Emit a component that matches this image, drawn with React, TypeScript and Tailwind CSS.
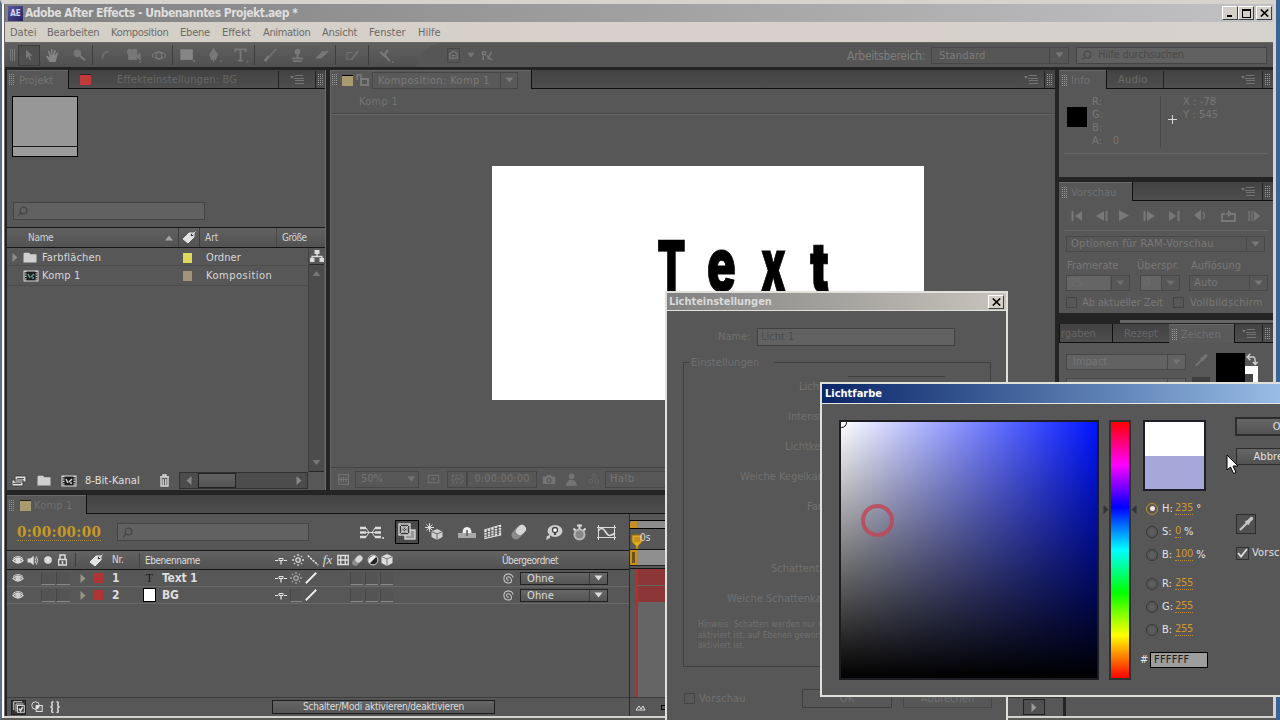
import React from "react";

type P = { className?: string; children?: React.ReactNode };

/* ---------- small building blocks ---------- */

const Svg = ({ className = "", box = "0 0 16 16", children }: P & { box?: string }) => (
  <svg viewBox={box} className={`shrink-0 ${className}`} fill="none" stroke="currentColor" strokeWidth="1.3">
    {children}
  </svg>
);

const Cell = ({ className = "", children }: P) => (
  <div className={`flex h-full shrink-0 items-center ${className}`}>{children}</div>
);

const Center = ({ className = "", children }: P) => (
  <div className={`flex h-full shrink-0 items-center justify-center ${className}`}>{children}</div>
);

const Grip = ({ className = "" }: P) => (
  <Svg className={`h-[12px] w-[6px] ${className}`} box="0 0 6 12">
    {[0, 2, 4].map((x) => (
      <path key={x} d={`M${x + 0.5} 0V12`} stroke="#9a9a9a" strokeWidth="1" strokeDasharray="1 1" />
    ))}
  </Svg>
);

const Down = ({ className = "" }: P) => (
  <Svg className={`h-[6px] w-[9px] ${className}`} box="0 0 9 6">
    <path d="M.5 .5H8.5L4.5 5.5Z" fill="currentColor" stroke="none" />
  </Svg>
);

const Right = ({ className = "" }: P) => (
  <Svg className={`h-[9px] w-[6px] ${className}`} box="0 0 6 9">
    <path d="M.5 0L5.5 4.5L.5 9Z" fill="currentColor" stroke="none" />
  </Svg>
);

const PanelMenu = () => (
  <Svg className="h-[9px] w-[14px] text-[#747474]" box="0 0 14 9">
    <path d="M0 1H4L2 4Z" fill="currentColor" stroke="none" />
    <path d="M5 .5H13M4 3.5H14M5 5.5H14M5 8.5H14" strokeWidth="1" />
  </Svg>
);

const Strip = ({ className = "", children }: P) => (
  <div
    className={`flex h-full shrink-0 items-center border-b border-l border-[#101010] bg-linear-to-b from-[#424242] to-[#4e4e4e] pt-px ${className}`}
  >
    {children}
  </div>
);

const Lens = ({ className = "" }: P) => (
  <Svg className={`h-[11px] w-[11px] ${className}`} box="0 0 11 11">
    <circle cx="6.5" cy="4.5" r="3.4" />
    <path d="M4 7L1 10" />
  </Svg>
);

const Eye = ({ className = "" }: P) => (
  <Svg className={`h-[9px] w-[12px] ${className}`} box="0 0 12 9">
    <path d="M1 4.5Q6 -.5 11 4.5Q6 9.5 1 4.5Z" />
    <circle cx="6" cy="4.5" r="2" fill="currentColor" />
    <path d="M1 2.5Q6 -1.5 11 2.5" strokeWidth="1" />
  </Svg>
);

const Tag = () => (
  <Svg className="h-[13px] w-[14px] text-[#e4e4e4]" box="0 0 14 13">
    <path d="M1 8L7 2L12 2L12 6L6 12Z" fill="currentColor" strokeWidth="1" />
    <circle cx="10" cy="4" r="1.3" fill="#333" stroke="none" />
    <path d="M10 4L13.5 .5" stroke="#ddd" strokeWidth="1" />
  </Svg>
);

const Shy = () => (
  <Svg className="h-[9px] w-[12px] text-[#e6e6e6]" box="0 0 12 9">
    <path d="M0 4.5H3M9 4.5H12M6 4V8.5" strokeWidth="1.2" />
    <path d="M4 4.500V2.500H8V4.500Z" strokeWidth="1" />
  </Svg>
);

const Sun = ({ className = "" }: P) => (
  <Svg className={`h-[12px] w-[12px] ${className}`} box="0 0 12 12">
    <circle cx="6" cy="6" r="2.2" />
    <path d="M6 0V2M6 10V12M0 6H2M10 6H12M2 2L3 3M9 9L10 10M10 2L9 3M3 9L2 10" />
  </Svg>
);

const Film = ({ className = "", tint = "#58a08e" }: P & { tint?: string }) => (
  <Svg className={className} box="0 0 16 12">
    <rect x="1" y="1" width="14" height="10" fill="#1c1c1c" strokeWidth="1" />
    <path d="M2.500 1V11M13.500 1V11" strokeWidth="2" strokeDasharray="1.2 1.2" />
    <path d="M5 4L7 8M8 7L11 4M9 8H11" stroke={tint} strokeWidth="1.6" />
  </Svg>
);

const Folder = () => (
  <Svg className="h-[11px] w-[14px] text-[#cfcfcf]" box="0 0 14 11">
    <path d="M.5 10.5V2Q.5 .8 2 .8H6L7.5 2.3H13.5V10.5Z" fill="currentColor" stroke="none" />
  </Svg>
);

const Cube = ({ className = "" }: P) => (
  <Svg className={className} box="0 0 12 12">
    <path d="M6 0L11.5 2.5V9L6 12L.5 9V2.5Z" fill="#dedede" stroke="none" />
    <path d="M.5 2.5L6 5L11.5 2.5M6 5V12" stroke="#777" strokeWidth="1" />
  </Svg>
);

const Pill = ({ className = "" }: P) => (
  <Svg className={className} box="0 0 16 18">
    <path d="M5 12L10.5 6" stroke="#8a8a8a" strokeWidth="9" strokeLinecap="round" />
    <path d="M9 8L11 6" stroke="#d6d6d6" strokeWidth="8" strokeLinecap="round" />
  </Svg>
);

const Dropper = ({ className = "" }: P) => (
  <Svg className={className} box="0 0 16 16">
    <path d="M2 14L9 7" strokeWidth="2.2" />
    <path d="M7.5 5L11 8.5" strokeWidth="2" />
    <path d="M10 6L13.5 2.5" strokeWidth="3.4" strokeLinecap="round" />
  </Svg>
);

/* ---------- title, menu, tools ---------- */

const WinButton = ({ children, className = "" }: P) => (
  <div
    className={`flex h-[14px] w-[16px] shrink-0 items-center justify-center border border-b-[#404040] border-l-white border-r-[#404040] border-t-white bg-[#d4d0c8] text-black ${className}`}
  >
    {children}
  </div>
);

const Cross = () => (
  <Svg className="h-[8px] w-[9px]" box="0 0 9 8">
    <path d="M.8 .5L8.2 7.5M8.2 .5L.8 7.5" strokeWidth="1.6" />
  </Svg>
);

const TitleBar = () => (
  <div className="flex h-[18px] items-center bg-linear-to-r from-[#808080] to-[#c2c2c4] pl-[3px]">
    <div className="flex h-[15px] w-[15px] items-center justify-center bg-linear-to-br from-[#5c5aa4] to-[#23205e] text-[8px] leading-[15px] font-bold text-[#d8d4f4]">
      AE
    </div>
    <span className="ml-[2px] text-[12px] font-bold tracking-[-0.49px] text-[#dedede]">
      Adobe After Effects - Unbenanntes Projekt.aep *
    </span>
    <WinButton className="ml-auto">
      <Svg className="h-[8px] w-[8px]" box="0 0 8 8">
        <path d="M1 7H6" strokeWidth="2" />
      </Svg>
    </WinButton>
    <WinButton>
      <Svg className="h-[9px] w-[9px]" box="0 0 9 9">
        <rect x=".5" y="1" width="8" height="7.5" strokeWidth="1" />
        <path d="M0 1H9" strokeWidth="2" />
      </Svg>
    </WinButton>
    <WinButton className="mr-[1px] ml-[2px]">
      <Cross />
    </WinButton>
  </div>
);

const MenuBar = () => (
  <div className="flex h-[20px] items-center bg-linear-to-r from-[#d2d0c6] via-[#d8d0cc] to-[#d6d2cc] pt-px pl-[5px] text-[#6c6a66]">
    <span className="w-[37px]">Datei</span>
    <span className="w-[64px] tracking-[-0.2px]">Bearbeiten</span>
    <span className="w-[69px] tracking-[-0.3px]">Komposition</span>
    <span className="w-[42px] tracking-[-0.2px]">Ebene</span>
    <span className="w-[41px]">Effekt</span>
    <span className="w-[59px] tracking-[-0.35px]">Animation</span>
    <span className="w-[47px] tracking-[-0.2px]">Ansicht</span>
    <span className="w-[49px]">Fenster</span>
    <span>Hilfe</span>
  </div>
);

const Tools = () => (
  <div className="flex h-[25px] items-center border-t border-[#6a6a62] bg-[#565656] text-[#787878]">
    <div className="flex h-full w-[435px] shrink-0 items-center bg-linear-to-b from-[#606060] to-[#505050] [clip-path:polygon(0_0,100%_0,98%_12%,96%_40%,94.5%_100%,0_100%)]">
      <Center className="w-[13px] pl-[3px]"><Grip className="h-[19px] w-[4px]" /></Center>
      <Center className="h-[21px]! w-[22px] border border-[#3c3c3c] bg-[#505050]">
        <Svg className="h-[14px] w-[12px]"><path d="M4 1V13L7 10L9 15L11 14L9 9H13Z" fill="currentColor" stroke="none" /></Svg>
      </Center>
      <Center className="w-[25px] text-[#868686]">
        <Svg className="h-[15px] w-[15px]"><path d="M5 15L1 9L2 8L5 10L3 3L4.5 3L6.5 8V1H8V8L10 2L11.5 2.5L10.5 8L13 4.5L14 5L11.5 14V15Z" fill="currentColor" stroke="none" /></Svg>
      </Center>
      <Center className="w-[27px]">
        <Svg className="h-[14px] w-[14px]"><circle cx="6" cy="6" r="3.6" fill="#777" /><path d="M9 9L15 14" strokeWidth="2.5" /></Svg>
      </Center>
      <div className="h-[20px] w-px bg-[#3c3c3c]" />
      <Center className="w-[27px] text-[#707070]">
        <Svg className="h-[14px] w-[14px]"><path d="M3 12Q2 5 10 4" strokeWidth="2" /></Svg>
      </Center>
      <Center className="w-[26px]">
        <Svg className="h-[15px] w-[17px]"><circle cx="4" cy="4" r="2.5" fill="currentColor" /><circle cx="9" cy="4" r="2.5" fill="currentColor" /><rect x="3" y="6" width="8" height="6" fill="currentColor" /><path d="M11 9L15 6V12Z" fill="currentColor" /><path d="M14 15H16" /></Svg>
      </Center>
      <Center className="w-[26px]">
        <Svg className="h-[15px] w-[18px]"><ellipse cx="8" cy="8" rx="7" ry="3.5" /><path d="M8 4L11 6V10L8 12L5 10V6Z" /></Svg>
      </Center>
      <div className="h-[20px] w-px bg-[#3c3c3c]" />
      <Center className="w-[29px] text-[#868686]"><Svg className="h-[15px] w-[17px]"><rect x="1" y="2" width="12" height="10" fill="currentColor" /><path d="M14 14H16" /></Svg></Center>
      <Center className="w-[25px]"><Svg className="h-[15px] w-[15px]"><path d="M7 1L11 7L9 12H5L3 7Z" fill="currentColor" /><path d="M7 12V15M14 14H16" /></Svg></Center>
      <Center className="w-[27px]"><Svg className="h-[15px] w-[16px]"><path d="M2 4V1.5H13V4M7.5 1.5V13.5M5 13.5H10" strokeWidth="2" /><path d="M14 14.5H16" /></Svg></Center>
      <div className="h-[20px] w-px bg-[#3c3c3c]" />
      <Center className="w-[30px]"><Svg className="h-[15px] w-[15px]"><path d="M14 1L6 10" strokeWidth="1.6" /><path d="M6 9L2 14" strokeWidth="3" /></Svg></Center>
      <Center className="w-[24px]"><Svg className="h-[15px] w-[15px]"><circle cx="8" cy="4" r="2.5" fill="currentColor" /><path d="M8 6V10M2 11H14M3 14H13" strokeWidth="2" /></Svg></Center>
      <Center className="w-[26px]"><Svg className="h-[13px] w-[16px]"><path d="M1 11L5 7H11L7 11ZM6 6L9 3H15L12 6Z" fill="currentColor" /></Svg></Center>
      <div className="h-[20px] w-px bg-[#3c3c3c]" />
      <Center className="w-[32px] text-[#707070]"><Svg className="h-[15px] w-[15px]"><path d="M9 12H2V5H8" /><path d="M14 3L7 12" strokeWidth="2" /></Svg></Center>
      <div className="h-[20px] w-px bg-[#3c3c3c]" />
      <Center className="w-[34px]"><Svg className="h-[15px] w-[16px]"><path d="M2 4L6 8L10 2M6 7L12 14" strokeWidth="2.4" /><path d="M14 15H16" /></Svg></Center>
    </div>
    <Center className="w-[26px]">
      <div className="flex h-[15px] w-[13px] items-center justify-center border border-[#474747]"><Svg className="h-[10px] w-[11px]"><path d="M2 13V6L8 2L14 6V13ZM5 9H11" strokeWidth="2" /></Svg></div>
    </Center>
    <Center className="w-[9px]"><Svg className="h-[10px] w-[8px]"><path d="M2 4H14L8 12Z" fill="currentColor" /></Svg></Center>
    <Center className="w-[24px]"><Svg className="h-[13px] w-[12px]"><path d="M2 3H6V7H2ZM8 8L14 14M9 13L14 3M3 14V9" strokeWidth="2" /></Svg></Center>
    <span className="ml-auto w-[84px] pt-px text-[12px] tracking-[-0.25px] text-[#7e7e7e]">Arbeitsbereich:</span>
    <div className="flex h-[17px] w-[138px] items-center border border-[#484848]">
      <span className="w-[118px] pt-px pl-[7px] tracking-[0.2px] text-[#7c7c7c]">Standard</span>
      <div className="h-full w-px bg-[#464646]" />
      <Center className="w-[18px]"><Down /></Center>
    </div>
    <div className="mr-[6px] ml-[7px] flex h-[17px] w-[191px] items-center border border-[#444] bg-[#616161] pl-[4px] text-[#4a4a4a]">
      <Lens />
      <span className="ml-[6px] tracking-[-0.2px]">Hilfe durchsuchen</span>
    </div>
  </div>
);

/* ---------- project panel ---------- */

const ProjectPanel = () => (
  <div className="flex w-[319px] shrink-0 flex-col border-r border-[#6e6e6e] bg-[#575757]">
    <div className="flex h-[19px]">
      <Cell className="w-[61px] border-t border-[#6a6a6a]">
        <Grip className="ml-[2px] w-[4px]" />
        <span className="ml-[4px] pt-px text-[#747474]">Projekt</span>
      </Cell>
      <Strip className="w-[257px]">
        <Cell className="w-[210px] border-r border-[#222] pl-[11px]">
          <div className="h-[11px] w-[11px] border-t border-[#222] bg-[#c23a3a]" />
          <span className="ml-[26px] tracking-[0.15px] text-[#666]">Effekteinstellungen: BG</span>
        </Cell>
        <Center className="w-[36px]"><PanelMenu /></Center>
        <Center className="w-[10px] border-l border-[#222]"><Grip /></Center>
      </Strip>
    </div>
    <div className="flex h-[138px] flex-col pl-[5px]">
      <div className="mt-[7px] flex h-[61px] w-[66px] flex-col border border-black bg-[#979797]">
        <div className="h-[50px] border-b border-[#181818]" />
        <div className="flex-1 bg-[#9c9c9c]" />
      </div>
      <div className="mt-[45px] ml-px flex h-[18px] w-[192px] items-center border border-[#444] bg-[#616161] pl-[3px] text-[#454545]">
        <Lens />
      </div>
    </div>
    <div className="flex h-[21px] items-center border-y border-[#161616] bg-linear-to-b from-[#616161] to-[#525252] text-[#d2d2d2]">
      <Cell className="w-[157px] pl-[21px]"><span className="text-[10px] tracking-[-0.3px]">Name</span></Cell>
      <Cell className="w-[14px]"><Down className="w-[10px] rotate-180 text-[#a4a4a4]" /></Cell>
      <Center className="w-[22px] border-x border-[#3e3e3e]"><Tag /></Center>
      <Cell className="w-[77px] border-r border-[#484848] pl-[5px] text-[10px]">Art</Cell>
      <Cell className="flex-1 pl-[5px] text-[10px] tracking-[-0.5px]">Größe</Cell>
    </div>
    <div className="flex flex-1">
      <div className="w-[300px]">
        <div className="flex h-[18px] items-center border-b border-[#4c4c4c] pt-[2px] text-[#d8d8d8]">
          <Cell className="w-[16px] pl-[5px]"><Right className="text-[#8c8c8c]" /></Cell>
          <Folder />
          <span className="ml-[5px] w-[141px] tracking-[0.15px]">Farbflächen</span>
          <div className="h-[10px] w-[9px] bg-[#dcd85c]" />
          <span className="ml-[14px] tracking-[0.1px]">Ordner</span>
        </div>
        <div className="flex h-[20px] items-center border-b border-[#4c4c4c] pt-px text-[#d8d8d8]">
          <Film className="ml-[16px] h-[12px] w-[16px]" />
          <span className="ml-[3px] w-[141px] tracking-[0.2px]">Komp 1</span>
          <div className="h-[10px] w-[9px] bg-[#a0947c]" />
          <span className="ml-[14px] tracking-[0.5px]">Komposition</span>
        </div>
      </div>
      <div className="ml-px flex w-[16px] flex-col border-l border-[#404040]">
        <Center className="h-[17px]! border-b border-[#2a2a2a]">
          <Svg className="h-[14px] w-[14px] text-[#dcdcdc]" box="0 0 14 14">
            <path d="M4.5 1H9.5V5H4.5ZM0 9H4.5V13H0ZM9.5 9H14V13H9.5Z" fill="currentColor" stroke="none" />
            <path d="M7 5V7.5M2 9V7.5H12V9" />
          </Svg>
        </Center>
        <div className="flex flex-1 flex-col items-center justify-between border-b border-[#262626] bg-[#4c4c4c] py-[5px] text-[#787878]">
          <Down className="h-[7px] rotate-180" />
          <Down className="h-[7px]" />
        </div>
      </div>
    </div>
    <div className="flex h-[18px] items-center pb-px text-[#e0e0e0]">
      <Center className="w-[24px]">
        <Svg className="h-[12px] w-[16px]" box="0 0 16 12">
          <path d="M4 1H15V7H4ZM1 5H12V11H1Z" fill="currentColor" stroke="#444" strokeWidth="1" />
          <path d="M2 8.500H10M6 3.500H13" stroke="#555" strokeWidth="1" />
        </Svg>
      </Center>
      <Center className="w-[25px]"><Folder /></Center>
      <Center className="w-[26px]"><Film className="h-[12px] w-[16px]" tint="#d0d0d0" /></Center>
      <span className="ml-[3px] w-[74px] tracking-[0.08px]">8-Bit-Kanal</span>
      <Svg className="h-[13px] w-[11px]" box="0 0 11 13">
        <path d="M1 3H10M4 3V1H7V3M2 4V12H9V4M4.2 5V11M6.8 5V11" />
      </Svg>
      <div className="ml-auto mr-[17px] flex h-[17px] w-[129px] items-center border border-[#303030] bg-[#4c4c4c] text-[#868686]">
        <Center className="w-[18px]"><Right className="rotate-180" /></Center>
        <div className="h-full w-[38px] border border-[#222] bg-linear-to-b from-[#626262] to-[#545454]" />
        <Right className="ml-auto mr-[5px]" />
      </div>
    </div>
  </div>
);

/* ---------- composition viewer ---------- */

const Viewer = () => (
  <div className="flex w-[725px] shrink-0 flex-col border-l border-[#6a6a6a] bg-[#575757]">
    <div className="flex h-[19px] shrink-0 text-[#7a7a7a]">
      <Cell className="w-[200px] border-t border-[#6a6a6a]">
        <Grip className="ml-px" />
        <div className="ml-[4px] h-[11px] w-[11px] border-t border-black bg-[#a99a70]" />
        <Svg className="mx-[3px] h-[12px] w-[13px]" box="0 0 13 12">
          <path d="M1 6V1H5V5" strokeWidth="1.5" /><rect x="5" y="5" width="7" height="6" strokeWidth="2" />
        </Svg>
        <div className="flex h-[17px] w-[146px] items-center border border-[#464646] bg-[#595959]">
          <span className="w-[127px] pt-px pl-[5px] tracking-[0.38px]">Komposition: Komp 1</span>
          <div className="h-full w-px bg-[#464646]" />
          <Center className="flex-1"><Down /></Center>
        </div>
      </Cell>
      <Strip className="w-[524px]">
        <Center className="ml-auto w-[26px]"><PanelMenu /></Center>
        <Center className="w-[11px] border-l border-[#222]"><Grip /></Center>
      </Strip>
    </div>
    <div className="flex h-[25px] shrink-0 items-center border-b border-[#484848] pt-px pl-[28px] tracking-[0.3px] text-[#747474]">
      Komp 1
    </div>
    <div className="flex-1 border-t border-[#666] pt-[51px] pl-[161px]">
      <div className="flex h-[234px] w-[432px] bg-white pt-[57px] pl-[165px] font-[Inter] text-[70px] leading-[85px] font-black text-black">
        <span className="block w-[50px] origin-[0_69px] scale-x-[0.6] [-webkit-text-stroke:0.5px_black]">T</span>
        <span className="block w-[54px] origin-[0_69px] scale-x-[0.68] scale-y-[1.06] [-webkit-text-stroke:1px_black]">e</span>
        <span className="block w-[49px] origin-[0_69px] scale-x-[0.58] scale-y-[1.06] [-webkit-text-stroke:1px_black]">x</span>
        <span className="block origin-[0_69px] scale-x-[0.68] scale-y-[0.97] [-webkit-text-stroke:1px_black]">t</span>
      </div>
    </div>
    <div className="flex h-[23px] shrink-0 items-center border-t border-[#444] text-[#747474]">
      <Center className="w-[24px]"><Svg className="h-[13px] w-[13px]"><rect x="2" y="2" width="12" height="12" /><path d="M5 5V11M8 5V11M11 5V11M2 8H14" /></Svg></Center>
      <div className="flex h-[17px] w-[64px] items-center border border-[#474747] pl-[5px]">
        <span className="w-[46px]">50%</span><Down />
      </div>
      <Center className="w-[28px]"><Svg className="h-[12px] w-[15px]"><rect x="1" y="3" width="14" height="10" /><path d="M8 6V10M5 8H11" /></Svg></Center>
      <Center className="h-[17px]! w-[20px] border border-[#474747]"><Svg className="h-[12px] w-[15px]"><rect x="1" y="3" width="14" height="10" strokeDasharray="3 2" /><path d="M4 10L7 6L10 9L13 6" /></Svg></Center>
      <Center className="h-[17px]! w-[70px] border border-[#474747] tracking-[0.1px]">0:00:00:00</Center>
      <Center className="w-[23px]"><Svg className="h-[13px] w-[14px]"><path d="M1 5H5L6 3H10L11 5H15V13H1Z" fill="currentColor" /><circle cx="8" cy="9" r="2.5" stroke="#555" /></Svg></Center>
      <Center className="w-[23px]"><Svg className="h-[13px] w-[13px]"><circle cx="8" cy="4" r="3" fill="currentColor" /><path d="M2 15Q3 9 8 9T14 15Z" fill="currentColor" /></Svg></Center>
      <Center className="w-[22px]"><Svg className="h-[12px] w-[12px] text-[#666]"><circle cx="8" cy="4" r="2.5" /><circle cx="4" cy="11" r="2.5" /><circle cx="12" cy="11" r="2.5" /></Svg></Center>
      <div className="flex h-[17px] w-[110px] items-center border border-[#474747] pl-[4px] tracking-[0.5px]">Halb</div>
    </div>
  </div>
);

/* ---------- right column ---------- */

const Pick = ({ className = "", children }: P) => (
  <div className={`flex h-[16px] shrink-0 items-center justify-between border border-[#484848] pr-[4px] pl-[6px] ${className}`}>
    {children}
    <div className="ml-auto mr-[4px] h-full w-px bg-[#4a4a4a]" />
    <Down />
  </div>
);

const Check = ({ className = "" }: P) => (
  <div className={`h-[11px] w-[11px] shrink-0 border border-[#454545] ${className}`} />
);

const SidePanels = () => (
  <div className="flex w-[214px] shrink-0 flex-col gap-[5px] text-[#787878]">
    <div className="h-[107px] shrink-0 bg-[#575757]">
      <div className="flex h-[19px]">
        <Cell className="w-[47px] border-t border-[#6a6a6a] pt-px text-[#707070]"><Grip className="ml-[3px]" /><span className="ml-[3px]">Info</span></Cell>
        <Strip className="w-[167px]">
          <Cell className="w-[57px] border-r border-[#222] pl-[11px] tracking-[0.3px] text-[#6a6a6a]">Audio</Cell>
          <Center className="ml-auto w-[28px]"><PanelMenu /></Center>
          <Center className="w-[11px] border-l border-[#222]"><Grip /></Center>
        </Strip>
      </div>
      <div className="mx-[5px] flex h-[65px] border-b border-[#666] pt-[7px]">
        <div className="mt-[11px] ml-[3px] h-[20px] w-[20px] bg-black" />
        <div className="ml-[5px] h-[52px] w-[69px] border-r border-[#484848] leading-[13px] tracking-[0.3px]">
          <div className="-mt-px">R:</div><div>G:</div><div>B:</div><div>A:&nbsp;&nbsp;&nbsp;0</div>
        </div>
        <Svg className="mt-[18px] ml-[6px] h-[11px] w-[11px] text-[#d8d8d8]" box="0 0 11 11"><path d="M5.5 1V10M1 5.500H10" strokeWidth="1" /></Svg>
        <div className="ml-[5px] leading-[13px] tracking-[0.1px]">
          <div className="-mt-px">X : -78</div><div>Y : 545</div>
        </div>
      </div>
    </div>
    <div className="h-[131px] shrink-0 bg-[#575757]">
      <div className="flex h-[19px]">
        <Cell className="w-[73px] border-t border-[#6a6a6a] pt-px text-[#707070]"><Grip className="ml-[3px]" /><span className="ml-[3px]">Vorschau</span></Cell>
        <Strip className="w-[141px]">
          <Center className="ml-auto w-[28px]"><PanelMenu /></Center>
          <Center className="w-[11px] border-l border-[#222]"><Grip /></Center>
        </Strip>
      </div>
      <div className="mx-[5px] flex h-[30px] items-center border-b border-[#6a6a6a]">
        <Center className="w-[25px]"><Svg className="h-[10px] w-[12px]" box="0 0 12 10"><path d="M1.500 0V10" strokeWidth="2" /><path d="M11 0L4 5L11 10Z" fill="currentColor" stroke="none" /></Svg></Center>
        <Center className="w-[25px]"><Svg className="h-[10px] w-[12px]" box="0 0 12 10"><path d="M8 0L0 5L8 10Z" fill="currentColor" stroke="none" /><path d="M10.500 0V10" strokeWidth="2" /></Svg></Center>
        <Center className="w-[20px]"><Svg className="h-[11px] w-[10px]" box="0 0 10 11"><path d="M0 0L10 5.500L0 11Z" fill="currentColor" stroke="none" /></Svg></Center>
        <Center className="w-[29px]"><Svg className="h-[10px] w-[12px]" box="0 0 12 10"><path d="M4 0L12 5L4 10Z" fill="currentColor" stroke="none" /><path d="M1.500 0V10" strokeWidth="2" /></Svg></Center>
        <Center className="w-[22px]"><Svg className="h-[10px] w-[12px]" box="0 0 12 10"><path d="M1 0L8 5L1 10Z" fill="currentColor" stroke="none" /><path d="M10.500 0V10" strokeWidth="2" /></Svg></Center>
        <Center className="w-[30px]"><Svg className="h-[11px] w-[13px]" box="0 0 13 11"><path d="M0 5L7 0V11Z" fill="currentColor" stroke="none" /><path d="M9 2Q12 5.500 9 9" /></Svg></Center>
        <Center className="w-[27px]"><Svg className="h-[12px] w-[15px]" box="0 0 15 12"><path d="M4 4H1V11H14V4H11" strokeWidth="1.800" /><path d="M5 4H8" strokeWidth="1.800" /><path d="M7 0L12 4L7 7Z" fill="currentColor" stroke="none" /></Svg></Center>
        <Center className="w-[24px]"><Svg className="h-[10px] w-[12px]" box="0 0 12 10"><path d="M1 0V10M4 0V10" /><path d="M6 0L12 5L6 10Z" fill="currentColor" stroke="none" /></Svg></Center>
      </div>
      <div className="flex h-[25px] items-center pl-[7px]"><Pick className="w-[199px] pl-[4px]! tracking-[0.3px]">Optionen für RAM-Vorschau</Pick></div>
      <div className="flex h-[18px] items-center pt-px pl-[8px] tracking-[0.1px]">
        <span className="w-[70px]">Framerate</span><span className="w-[54px]">Überspr.</span><span>Auflösung</span>
      </div>
      <div className="flex h-[17px] items-center pl-[7px]">
        <Pick className="w-[64px] bg-linear-to-r from-[#656565] from-70% to-[#575757] to-70% pl-[3px]! text-[#6e6e6e]"><span>25</span></Pick>
        <Pick className="ml-[10px] w-[40px] bg-linear-to-r from-[#656565] from-55% to-[#575757] to-55% pl-[3px]! text-[#6e6e6e]"><span>0</span></Pick>
        <Pick className="ml-[9px] w-[79px] pl-[4px]! tracking-[0.2px]">Auto</Pick>
      </div>
      <div className="flex h-[22px] items-center pt-px pl-[7px]">
        <Check /><span className="ml-[5px] w-[91px] tracking-[-0.1px]">Ab aktueller Zeit</span><Check /><span className="ml-[6px] tracking-[0.3px]">Vollbildschirm</span>
      </div>
    </div>
    <div className="mt-[2px] flex min-h-0 flex-1 flex-col">
      <div className="ml-[61px] h-[3px] bg-[#666]" />
      <div className="mt-px flex h-[19px] shrink-0">
        <Strip className="w-[53px] pl-[1px] text-[#666]">rgaben</Strip>
        <Strip className="w-[57px] pl-[11px] text-[#666]">Rezept</Strip>
        <Cell className="w-[65px] border-t border-[#6a6a6a] bg-[#5a5a5a] pt-px text-[#707070]"><Grip className="ml-[3px]" /><span className="ml-[3px]">Zeichen</span></Cell>
        <Strip className="flex-1">
          <Center className="w-[27px]"><PanelMenu /></Center>
          <Center className="w-[11px] border-l border-[#222]"><Grip /></Center>
        </Strip>
      </div>
      <div className="flex flex-1 bg-[#575757] pt-[10px] pl-[7px]">
        <div className="flex flex-col gap-[8px] pt-px">
          <Pick className="w-[120px] bg-[#626262] text-[#747474]">Impact</Pick>
          <Pick className="w-[120px] bg-[#626262]" />
        </div>
        <div className="flex w-[30px] flex-col items-center gap-[9px]">
          <Dropper className="h-[15px] w-[14px] text-[#757575]" />
          <div className="h-[8px] w-[18px] bg-[#3e3e3e]" />
        </div>
        <div className="h-[29px] w-[29px] bg-black" />
        <div className="flex flex-col">
          <Svg className="h-[13px] w-[14px] text-[#d0d0d0]"><path d="M3 5H10Q12 5 12 13M6 1L2 5L6 9M9 11L12 14L15 11" strokeWidth="1.8" /></Svg>
          <div className="h-[20px] w-[13px] border-t-8 border-r-[5px] border-white bg-[#444]" />
        </div>
      </div>
    </div>
  </div>
);

/* ---------- timeline ---------- */

const Slot = ({ className = "" }: P) => (
  <div className={`h-[13px] shrink-0 border-b border-l border-b-[#8a8a8a] border-l-[#464646] bg-[#545454] ${className}`} />
);

const Layer = ({ nr, name, solid }: { nr: string; name: string; solid?: boolean }) => (
  <div className="flex h-[17px] items-center border-b border-[#6a6a6a] text-[#dedede]">
    <Center className="w-[22px]"><Eye className="text-[#cfcfcf]" /></Center>
    <Slot className="ml-[12px] w-[14px]" />
    <Slot className="ml-[1px] w-[14px]" />
    <Right className="ml-[10px] text-[#9a9484]" />
    <div className="ml-[7px] h-[10px] w-[10px] bg-[#b03434]" />
    <span className="ml-[9px] w-[31px] text-[12px] font-bold">{nr}</span>
    <Center className="w-[13px]">
      {solid ? (
        <div className="h-[14px] w-[14px] border border-black bg-white" />
      ) : (
        <span className="font-['Liberation_Serif',serif] text-[12px] text-[#1a1a1a]">T</span>
      )}
    </Center>
    <span className="ml-[6px] w-[111px] text-[12px] font-bold tracking-[-0.2px]">{name}</span>
    <Center className="w-[16px]"><Shy /></Center>
    <Center className="w-[14px]">{solid ? <Slot className="w-[12px]" /> : <Sun className="h-[10px] w-[10px] text-[#a8a8a8]" />}</Center>
    <Center className="w-[16px]"><Svg className="h-[12px] w-[12px] text-[#eee]"><path d="M1 15L15 1" strokeWidth="2.400" /></Svg></Center>
    <Slot className="ml-[31px] w-[13px]" />
    <Slot className="ml-[2px] w-[13px]" />
    <Slot className="ml-[2px] w-[13px]" />
    <Svg className="ml-[110px] h-[11px] w-[11px] text-[#cdcdcd]" box="0 0 12 12">
      <path d="M11 5Q10 1 6 1Q1 1 1 6Q1 11 6 11Q10 11 9 7Q8 4 6 4Q3.500 4 4 6.500Q4.500 8.500 6.500 7.500" strokeWidth="1.1" />
    </Svg>
    <div className="ml-[6px] flex h-[13px] w-[88px] items-center border border-[#222] bg-linear-to-b from-[#666] to-[#555] pl-[6px]">
      <span className="pt-px tracking-[0.1px]">Ohne</span>
      <div className="ml-auto h-full w-px bg-[#3a3a3a]" />
      <Down className="mx-[4px] text-[#dcdcdc]" />
    </div>
  </div>
);

const Timeline = () => (
  <div className="flex w-[1056px] shrink-0 flex-col bg-[#575757]">
    <div className="flex h-[19px] shrink-0">
      <Cell className="w-[79px] border-t border-[#6a6a6a] pt-px">
        <Grip className="ml-[2px] w-[4px]" />
        <div className="ml-[5px] h-[11px] w-[11px] border-t border-[#222] bg-[#a99a70]" />
        <span className="ml-[3px] tracking-[0.2px] text-[#707070]">Komp 1</span>
      </Cell>
      <Strip className="flex-1" />
    </div>
    <div className="flex min-h-0 flex-1">
      <div className="flex w-[622px] shrink-0 flex-col">
        <div className="flex h-[36px] shrink-0 items-center">
          <div className="ml-[10px] w-[84px] border-b border-dotted border-[#a8842c] pt-px font-['DejaVu_Serif_Condensed','DejaVu_Serif'] text-[15px] leading-[15px] font-bold tracking-[0.35px] text-[#c79a22]">
            0:00:00:00
          </div>
          <div className="ml-[16px] flex h-[18px] w-[192px] items-center border border-[#454545] bg-[#616161] pl-[4px] text-[#454545]"><Lens /></div>
          <div className="ml-[51px] flex h-full items-center text-[#dcdcdc]">
            <Svg className="h-[13px] w-[24px]" box="0 0 24 13">
              <path d="M0 2H6M0 6.500H6M0 11H6M15 2H21M15 6.500H21M15 11H21" strokeWidth="2.4" /><path d="M6 2L9 6.500H12L15 2M6 6.500H15M6 11L9 6.500M15 11L12 6.500" strokeWidth="1" /><path d="M22 12H24" />
            </Svg>
            <Center className="ml-[11px] h-[24px]! w-[24px] border border-black bg-[#4a4a4a]">
              <Svg className="h-[18px] w-[18px]" box="0 0 18 18"><rect x="7" y="7" width="10" height="9" fill="#999" /><rect x="1" y="1" width="11" height="11" fill="#3a3a3a" /><rect x="4" y="4" width="5" height="5" /><path d="M1 1L12 12M12 1L1 12" strokeWidth=".8" /></Svg>
            </Center>
            <Center className="w-[29px]">
              <Svg className="h-[18px] w-[18px]" box="0 0 18 18"><path d="M4.500 0V9M0 4.500H9M1.500 1.500L7.500 7.500M7.500 1.500L1.500 7.500" strokeWidth="1" /><path d="M12 6L17.500 8.500V14L12 17L6.500 14V8.500Z" fill="#d0d0d0" stroke="none" /><path d="M6.500 8.500L12 11L17.500 8.500M12 11V17" stroke="#666" strokeWidth="1" /></Svg>
            </Center>
            <Center className="ml-[6px] w-[26px]">
              <Svg className="h-[14px] w-[18px]" box="0 0 18 14"><rect x="0" y="8" width="18" height="5" fill="#a8a8a8" stroke="none" /><path d="M4.500 8Q4.500 2 9 2T13.500 8Z" fill="#f0f0f0" stroke="none" /><path d="M9 5V11" stroke="#555" strokeWidth="1.500" /></Svg>
            </Center>
            <Center className="w-[26px]">
              <Svg className="h-[16px] w-[18px]" box="0 0 18 16"><path d="M1.500 6V15M5 5V14M8.500 4V13M12 2V12M16 1V11" strokeWidth="2.400" strokeDasharray="2 .7" /><path d="M0 6L17 1M1 14.500L17 11" strokeWidth="1" /></Svg>
            </Center>
            <Center className="w-[26px]"><Pill className="h-[18px] w-[18px]" /></Center>
            <Center className="ml-[8px] w-[26px]">
              <Svg className="h-[17px] w-[19px]" box="0 0 19 17"><ellipse cx="11" cy="7" rx="7.500" ry="6" fill="#cfcfcf" stroke="none" /><path d="M3 12L6 11V14L2 16Z" fill="#cfcfcf" stroke="none" /><circle cx="11" cy="6" r="2.500" fill="#fff" stroke="#444" /><path d="M11 8V11" stroke="#444" strokeWidth="2" /></Svg>
            </Center>
            <Center className="w-[26px]">
              <Svg className="h-[17px] w-[15px]" box="0 0 15 17"><circle cx="7.500" cy="10.500" r="5" fill="#888" stroke="#b8b8b8" strokeWidth="2" /><path d="M5 1.500H10M7.500 2V5M1.500 4.500L3.500 6.500M13.500 4.500L11.500 6.500" strokeWidth="2" /></Svg>
            </Center>
            <Center className="w-[28px]">
              <Svg className="h-[15px] w-[19px]" box="0 0 19 15"><path d="M0 2.500H19M0 12.500H19M1.500 0V15M17.500 0V15" strokeWidth="1" /><path d="M1 6Q5 1 8 6T13 10.500T18 8" strokeWidth="1.600" /></Svg>
            </Center>
          </div>
        </div>
        <div className="flex h-[20px] shrink-0 items-center border-y border-[#161616] bg-linear-to-b from-[#636363] to-[#525252] text-[10px] text-[#dcdcdc]">
          <Center className="w-[20px] pl-[2px]"><Eye /></Center>
          <Center className="w-[12px]"><Svg className="h-[11px] w-[12px]"><path d="M0 5H4L9 1V15L4 11H0Z" fill="currentColor" stroke="none" /><path d="M11 4Q13 8 11 12M13 2Q16.500 8 13 14" /></Svg></Center>
          <Center className="w-[17px]"><Svg className="h-[8px] w-[8px]"><circle cx="8" cy="8" r="7.500" fill="currentColor" stroke="none" /></Svg></Center>
          <Center className="w-[13px]"><Svg className="h-[12px] w-[9px]" box="0 0 9 12"><path d="M.5 5.500H8.500V11H.5Z" strokeWidth="1.500" /><path d="M2 5V1H7V5M4.500 7V10" strokeWidth="1.500" /></Svg></Center>
          <div className="ml-[6px] h-[14px] w-px bg-[#3c3c3c]" />
          <Center className="w-[38px]"><div className="pl-[2px]"><Tag /></div></Center>
          <span className="ml-[-2px] w-[27px] tracking-[-0.2px]">Nr.</span>
          <div className="h-[14px] w-px bg-[#444]" />
          <span className="w-[131px] pt-px pl-[5px] tracking-[-0.45px]">Ebenenname</span>
          <Center className="w-[19px]"><Shy /></Center>
          <Center className="w-[15px]"><Sun /></Center>
          <Center className="w-[15px]"><Svg className="h-[12px] w-[12px]"><path d="M1 2L15 15" strokeWidth="2.200" strokeDasharray="3 1.500" /></Svg></Center>
          <Center className="w-[15px]"><span className="font-['Liberation_Serif',serif] text-[13px] italic">fx</span></Center>
          <Center className="w-[15px]"><Svg className="h-[12px] w-[12px]"><path d="M1 1V15M15 1V15M5 1V15M11 1V15M1 2H15M1 8H15M1 14H15" strokeWidth="1.800" /></Svg></Center>
          <Center className="w-[15px]"><Pill className="h-[13px] w-[13px]" /></Center>
          <Center className="w-[15px]"><Svg className="h-[12px] w-[12px]"><circle cx="8" cy="8" r="6.500" fill="#222" /><path d="M3.500 12.500A6.500 6.500 0 0 1 12.500 3.500Z" fill="#eee" stroke="none" /></Svg></Center>
          <Center className="w-[14px]"><Cube className="h-[12px] w-[12px]" /></Center>
          <span className="ml-[108px] pt-px tracking-[-0.5px]">Übergeordnet</span>
        </div>
        <div className="flex-1">
          <Layer nr="1" name="Text 1" />
          <Layer nr="2" name="BG" solid />
        </div>
        <div className="flex h-[19px] shrink-0 items-center border-t border-[#3c3c3c] text-[#dcdcdc]">
          <Center className="h-[15px]! ml-[4px] w-[15px] border border-[#222] bg-[#333]"><Svg className="h-[12px] w-[12px]"><path d="M1 12V1H12M4 14V4H14" /><rect x="6" y="6" width="9" height="9" /><path d="M8 10L10 13L13 8" strokeWidth="2" /></Svg></Center>
          <Center className="w-[22px]"><Svg className="h-[12px] w-[14px]"><circle cx="6" cy="6" r="5" /><rect x="7" y="6" width="8" height="8" fill="#666" /><path d="M7 11A5 5 0 0 0 11 6H7Z" fill="#eee" /></Svg></Center>
          <Center className="w-[14px]"><Svg className="h-[12px] w-[12px]"><path d="M6 1Q3 1 4 4T2 8Q5 8 4 12T6 15M10 1Q13 1 12 4T14 8Q11 8 12 12T10 15" strokeWidth="2" /></Svg></Center>
          <Center className="ml-[210px] h-[14px]! w-[223px] border border-[#1c1c1c] bg-linear-to-b from-[#666] to-[#555] text-[10px] tracking-[-0.2px]">
            Schalter/Modi aktivieren/deaktivieren
          </Center>
        </div>
      </div>
      <div className="flex flex-1 flex-col border-l border-[#2a2a2a]">
        <div className="mt-[6px] flex h-[9px] shrink-0 border-y border-black bg-[#8b8b8b]"><div className="w-[7px] rounded-tl-[4px] bg-[#c88f1c]" /></div>
        <div className="flex h-[20px] shrink-0 bg-[#585858]">
          <Svg className="mt-[4px] h-[16px] w-[14px]" box="0 0 14 16"><path d="M2 2H12V9L8 13V16H6V13L2 9Z" fill="#e0aa20" stroke="#9a7010" strokeWidth="1" /><path d="M5 4V9M7 4V9M9 4V9" stroke="#a87a10" strokeWidth="1" /></Svg>
          <span className="mt-[2px] ml-[-4px] text-[10px] text-[#ddd]">0s</span>
        </div>
        <div className="flex h-[20px] shrink-0 border-y border-[#161616] bg-[#575757]">
          <div className="h-[16px] w-full border-b border-[#222] bg-[#8f8f8f]"><div className="h-[15px] w-[7px] border-2 border-[#c88f1c] bg-[#6b5420]" /></div>
        </div>
        <div className="ml-[6px] flex flex-1 flex-col border-l-2 border-[#b03030] bg-[#656565]">
          <div className="h-[16px] bg-[#8c3638]" /><div className="mt-px h-[16px] bg-[#8c3638]" />
        </div>
        <div className="flex h-[19px] shrink-0 items-center border-t border-[#3c3c3c] bg-[#575757] text-[#e0e0e0]">
          <Svg className="ml-[5px] h-[7px] w-[11px]" box="0 0 11 7"><path d="M1 6L4 2L6 5L8 2L10 6Z" strokeWidth="1" /></Svg>
          <div className="ml-[15px] h-[5px] w-[10px] border border-black" />
          <Center className="ml-auto h-[16px]! mr-[18px] w-[22px] border border-[#222] bg-[#505050]"><Right className="text-[#999]" /></Center>
        </div>
      </div>
    </div>
  </div>
);

/* ---------- dialogs ---------- */

const Caption = ({ className = "", children }: P) => <div className={`h-[30px] ${className}`}>{children}</div>;

const LightSettings = () => (
  <div className="absolute top-[291px] left-[665px] flex h-[440px] w-[343px] flex-col border-2 border-[#e2e0da] bg-[#575757] text-[#707070]">
    <div className="flex h-[18px] shrink-0 items-center border-b border-[#e2e0da] bg-linear-to-r from-[#828282] to-[#c8c4bc] pl-[2px]">
      <span className="pt-px font-bold tracking-[-0.04px] text-[#dadada]">Lichteinstellungen</span>
      <WinButton className="mr-[2px] ml-auto"><Cross /></WinButton>
    </div>
    <div className="mt-[16px] flex h-[19px] shrink-0 items-center">
      <span className="w-[90px] pt-px pl-[51px]">Name:</span>
      <div className="flex h-[18px] w-[198px] items-center border border-[#404040] bg-[#626262] pl-[3px] text-[#4c4c4c]">Licht 1</div>
    </div>
    <div className="mt-[8px] flex items-center">
      <div className="ml-[16px] h-px w-[6px] bg-[#404040]" />
      <span className="ml-[2px] w-[83px] pt-px leading-[15px] tracking-[0.1px]">Einstellungen</span>
      <div className="h-px w-[217px] bg-[#404040]" />
    </div>
    <div className="mt-[-8px] mr-[15px] ml-[16px] h-[305px] shrink-0 border-x border-b border-[#404040] pt-[14px]">
      <div className="mb-[3px] ml-[164px] h-px w-[97px] bg-[#404040]" />
      <Caption className="pl-[115px]">Lichtart:</Caption>
      <Caption className="pl-[104px]">Intensität:</Caption>
      <Caption className="pl-[101px]">Lichtkegel:</Caption>
      <Caption className="pl-[56px]">Weiche Kegelkante:</Caption>
      <Caption className="h-[62px]! pl-[123px]">Farbe:</Caption>
      <Caption className="pl-[87px]">Schattentiefe:</Caption>
      <Caption className="h-[27px]! pl-[43px]">Weiche Schattenkante:</Caption>
      <div className="w-[290px] pl-[14px] text-[8.5px] leading-[10.5px] tracking-[0.1px]">
        <div>Hinweis: Schatten werden nur von Ebenen, für die</div>
        <div>aktiviert ist, auf Ebenen geworfen, für die sie</div>
        <div>aktiviert ist.</div>
      </div>
    </div>
    <div className="mt-[22px] flex h-[19px] items-center pl-[17px]">
      <Check /><span className="ml-[4px] w-[103px] tracking-[0.2px]">Vorschau</span>
      <Center className="w-[90px] border border-[#404040]">OK</Center>
      <Center className="ml-[11px] w-[89px] border border-[#484848]">Abbrechen</Center>
    </div>
  </div>
);

const Channel = ({ label, value, unit, on }: { label: string; value: string; unit?: string; on?: boolean }) => (
  <div className="flex h-[23px] items-center text-[#e4e4e4]">
    <div className={`flex h-[12px] w-[12px] items-center justify-center rounded-full border ${on ? "border-[#c09030]" : "border-[#383838]"}`}>
      <div className={`rounded-full ${on ? "h-[5px] w-[5px] bg-[#f0e8dc]" : "h-[6px] w-[6px] bg-[#5e5e5e]"}`} />
    </div>
    <span className="ml-[4px] w-[13px]">{label}:</span>
    <span className="border-b border-dotted border-[#b88a28] leading-[12px] tracking-[-0.25px] text-[#cf9a28]">{value}</span>
    <span className="ml-[3px]">{unit}</span>
  </div>
);

const ColorDialog = () => (
  <div className="absolute top-[382px] left-[820px] flex h-[315px] w-[500px] flex-col border-2 border-[#e2e0da] bg-[#575757]">
    <div className="flex h-[20px] shrink-0 items-center border-b border-[#e8e6e0] bg-linear-to-r from-[#0c2668] to-[#a6caf0] pl-[3px]">
      <span className="font-bold text-white">Lichtfarbe</span>
    </div>
    <div className="flex items-start pt-[16px] pl-[17px]">
      <div className="relative h-[260px] w-[260px] shrink-0 overflow-hidden border-2 border-[#1c1c22] bg-[linear-gradient(to_bottom,transparent,#000),linear-gradient(to_right,#fff,#0015ff)]">
        <div className="absolute top-[-5px] left-[-5px] h-[11px] w-[11px] rounded-full border border-black" />
        <div className="absolute top-[82px] left-[20px] h-[33px] w-[33px] rounded-full border-[4px] border-[#c04858]/85" />
      </div>
      <Right className="mt-[85px] ml-[4px] text-[#333]" />
      <div className="h-[260px] w-[22px] shrink-0 border-2 border-[#303030] bg-[linear-gradient(to_bottom,#f00,#f0f_16.6%,#00f_33.3%,#0ff_50%,#0f0_66.6%,#ff0_83.3%,#f00)]" />
      <Right className="mt-[85px] rotate-180 text-[#333]" />
      <div className="ml-[5px] flex w-[92px] shrink-0 flex-col pl-px">
        <div className="flex h-[71px] w-[63px] flex-col border-2 border-[#1e1e26]"><div className="h-[34px] bg-white" /><div className="flex-1 bg-[#a5a8d8]" /></div>
        <div className="mt-[6px] ml-[3px]">
          <Channel label="H" value="235" unit="°" on />
          <Channel label="S" value="0" unit="%" />
          <Channel label="B" value="100" unit="%" />
        </div>
        <div className="mt-[6px] ml-[3px]">
          <Channel label="R" value="255" />
          <Channel label="G" value="255" />
          <Channel label="B" value="255" />
        </div>
        <div className="mt-[11px] ml-[-3px] flex items-center text-[#e4e4e4]">
          <span className="w-[10px]">#</span>
          <div className="flex h-[16px] w-[58px] items-center border border-black bg-[#9d9d9d] pl-[3px] tracking-[0.2px] text-[#1c1c1c]">FFFFFF</div>
        </div>
      </div>
      <div className="ml-[1px] flex w-[90px] shrink-0 flex-col text-[#e0e0e0]">
        <Center className="mt-[-3px] h-[19px]! w-[90px] border-2 border-[#2c2c2c] bg-linear-to-b from-[#666] to-[#535353]">OK</Center>
        <Center className="mt-[12px] ml-px h-[17px]! w-[89px] border border-[#2c2c2c] bg-linear-to-b from-[#666] to-[#535353] tracking-[0.1px]">Abbrechen</Center>
        <Center className="mt-[49px] ml-px h-[20px]! w-[20px] border border-[#2c2c2c] bg-[#505050]"><Dropper className="h-[16px] w-[16px] text-[#c8c8c8]" /></Center>
        <div className="mt-[12px] ml-px flex items-center">
          <div className="flex h-[13px] w-[13px] items-center justify-center border border-[#303030]"><Svg className="h-[11px] w-[11px]" box="0 0 11 11"><path d="M1 5L4 8.500L10 1" strokeWidth="1.800" /></Svg></div>
          <span className="ml-[3px] tracking-[0.2px]">Vorschau</span>
        </div>
      </div>
    </div>
  </div>
);

export default function App() {
  return (
    <div className="relative flex h-[720px] w-[1280px] overflow-hidden bg-[#3a6496] font-['DejaVu_Sans_Condensed','DejaVu_Sans',sans-serif] text-[11px] leading-[14px] font-normal whitespace-nowrap [font-stretch:condensed]">
      <div className="flex w-[1276px] flex-col border-t-4 border-b-2 border-l-2 border-t-[#d6d3cd] border-b-[#5a5a58] border-l-[#5c6f88] bg-[#d4d2cc]">
        <div className="flex flex-1 flex-col border-l-2 border-l-white pr-[3px] pb-[2px]">
          <div className="flex flex-1 flex-col border-l border-[#6a6a68] bg-[#242424]">
            <TitleBar />
            <MenuBar />
            <Tools />
            <div className="mt-[3px] ml-[2px] flex h-[420px] shrink-0 gap-[4px]">
              <ProjectPanel />
              <Viewer />
              <SidePanels />
            </div>
            <div className="mt-[5px] ml-[2px] flex h-[221px] shrink-0 gap-[3px]">
              <Timeline />
              <div className="flex-1 bg-[#575757]" />
            </div>
          </div>
        </div>
      </div>
      <LightSettings />
      <ColorDialog />
      <Svg className="absolute top-[454px] left-[1226px] h-[21px] w-[14px]" box="0 0 14 21">
        <path d="M1 1V16L4.500 13L7.500 19.500L10 18.500L7 12H12Z" fill="#fff" stroke="#000" strokeWidth="1" />
      </Svg>
    </div>
  );
}
